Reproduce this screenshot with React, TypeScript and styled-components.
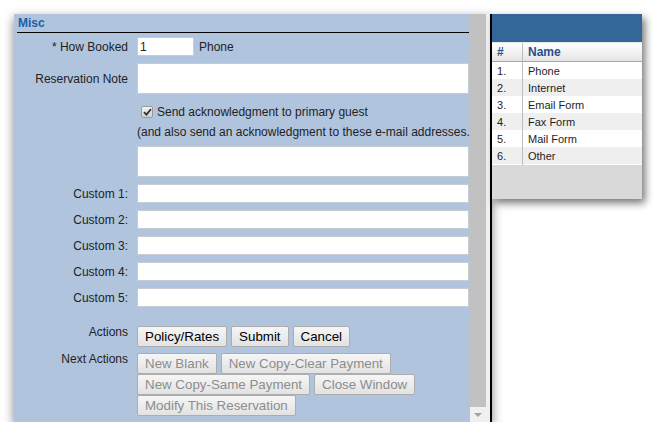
import styled, { createGlobalStyle } from 'styled-components';

const GlobalStyle = createGlobalStyle`
  body {
    margin: 0;
    background: #ffffff;
    font-family: 'Liberation Sans', Arial, sans-serif;
    color: #222222;
  }
`;

const Page = styled.div`
  display: flex;
  align-items: flex-start;
  padding: 14px 0 0 14px;
`;

const LeftWindow = styled.div`
  width: 478px;
  height: 408px;
  box-sizing: border-box;
  display: flex;
  background: #b0c4de;
  border-right: 2px solid #000;
  box-shadow: 0 4px 10px rgba(0, 0, 0, 0.5);
`;

const FormArea = styled.div`
  width: 456px;
  flex: none;
  font-size: 12px;
`;

const SectionTitle = styled.div`
  margin: 0 1px 0 3px;
  padding-left: 1px;
  height: 18px;
  line-height: 18px;
  border-bottom: 1px solid #000;
  font-weight: bold;
  font-size: 12px;
  color: #1d5fa6;
`;

const Row = styled.div<{ $top: number; $align?: string }>`
  display: grid;
  grid-template-columns: 114px 332px;
  column-gap: 9px;
  align-items: ${(p) => p.$align || 'center'};
  margin-top: ${(p) => p.$top}px;
`;

const Label = styled.div<{ $pad?: number }>`
  text-align: right;
  white-space: nowrap;
  margin-top: ${(p) => p.$pad || 0}px;
`;

const Field = styled.div`
  display: flex;
  align-items: center;
  gap: 5px;
`;

const TextInput = styled.input<{ $w?: number }>`
  box-sizing: border-box;
  width: ${(p) => (p.$w ? `${p.$w}px` : '100%')};
  height: 19px;
  margin: 0;
  padding: 0 2px;
  border: 1px solid #c6ccd4;
  background: #fff;
  font-family: 'Liberation Sans', Arial, sans-serif;
  font-size: 12px;
  color: #222;
  outline: none;
`;

const TextArea = styled.div`
  box-sizing: border-box;
  width: 100%;
  height: 31px;
  border: 1px solid #c6ccd4;
  background: #fff;
`;

const CheckLine = styled.label`
  display: flex;
  align-items: center;
  gap: 4px;
  height: 21px;
  padding-left: 4px;
`;

const CheckBox = styled.span`
  box-sizing: border-box;
  width: 12px;
  height: 12px;
  border: 1px solid #9a9a9a;
  border-radius: 2px;
  background: linear-gradient(#f4f4f4, #d0d0d0);
  display: flex;
  align-items: center;
  justify-content: center;
`;

const Note = styled.div`
  line-height: 14px;
  white-space: nowrap;
`;

const ButtonWrap = styled.div`
  display: flex;
  flex-wrap: wrap;
  column-gap: 4px;
  row-gap: 0;
  width: 300px;
`;

const Button = styled.button<{ $disabled?: boolean }>`
  box-sizing: border-box;
  height: 21px;
  margin: 0;
  padding: 0 7px;
  border: 1px solid #adadad;
  border-radius: 2px;
  background: linear-gradient(#f6f6f6, #e2e2e2);
  font-family: 'Liberation Sans', Arial, sans-serif;
  font-size: 13.33px;
  line-height: 19px;
  color: ${(p) => (p.$disabled ? '#8d8d8d' : '#000')};
  white-space: nowrap;
`;

const ScrollCol = styled.div`
  width: 20px;
  display: flex;
  flex-direction: column;
  background: #f0f0f0;
`;

const Thumb = styled.div`
  flex: 1;
  width: 16px;
  background: #c1c1c1;
`;

const ArrowBox = styled.div`
  height: 15px;
  width: 16px;
  display: flex;
  align-items: center;
  justify-content: center;
`;

const DownArrow = styled.span`
  width: 0;
  height: 0;
  border-left: 4px solid transparent;
  border-right: 4px solid transparent;
  border-top: 4px solid #a3a3a3;
`;

const RightPanel = styled.div`
  width: 150px;
  height: 185px;
  background: #d9d9d9;
  box-shadow: 3px 4px 8px rgba(0, 0, 0, 0.55);
`;

const PanelHeader = styled.div`
  height: 28px;
  background: #336699;
  border-bottom: 1px solid #e8e8e8;
`;

const Table = styled.table`
  width: 100%;
  border-collapse: collapse;
  font-size: 11px;
  border-bottom: 1px solid #fff;
`;

const Th = styled.th<{ $first?: boolean }>`
  height: 18px;
  padding: 0 5px;
  text-align: left;
  font-size: 12px;
  font-weight: bold;
  color: #2b4e8e;
  background: linear-gradient(#ffffff, #e4e4e4);
  border-bottom: 1px solid #a8a8a8;
  border-right: ${(p) => (p.$first ? '1px solid #bdbdbd' : 'none')};
  width: ${(p) => (p.$first ? '20px' : 'auto')};
`;

const Tr = styled.tr<{ $alt: boolean }>`
  background: ${(p) => (p.$alt ? '#efefef' : '#ffffff')};
`;

const Td = styled.td<{ $first?: boolean }>`
  height: 17px;
  padding: 0 5px;
  color: #1e1e1e;
  border-right: ${(p) => (p.$first ? '1px solid #bdbdbd' : 'none')};
`;

const methods = ['Phone', 'Internet', 'Email Form', 'Fax Form', 'Mail Form', 'Other'];

export default function App() {
  return (
    <>
      <GlobalStyle />
      <Page>
        <LeftWindow>
          <FormArea>
            <SectionTitle>Misc</SectionTitle>
            <Row $top={4}>
              <Label>* How Booked</Label>
              <Field>
                <TextInput $w={57} defaultValue="1" />
                <span>Phone</span>
              </Field>
            </Row>
            <Row $top={7}>
              <Label>Reservation Note</Label>
              <TextArea />
            </Row>
            <Row $top={7}>
              <span />
              <CheckLine>
                <CheckBox>
                  <svg width="9" height="8" viewBox="0 0 9 8">
                    <path d="M1 4.2 L3.4 6.6 L8 1.2" fill="none" stroke="#333" strokeWidth="1.8" />
                  </svg>
                </CheckBox>
                <span>Send acknowledgment to primary guest</span>
              </CheckLine>
            </Row>
            <Row $top={3}>
              <span />
              <Note>(and also send an acknowledgment to these e-mail addresses.</Note>
            </Row>
            <Row $top={7}>
              <span />
              <TextArea />
            </Row>
            {[1, 2, 3, 4, 5].map((n) => (
              <Row key={n} $top={7}>
                <Label>Custom {n}:</Label>
                <TextInput />
              </Row>
            ))}
            <Row $top={19} $align="start">
              <Label $pad={-1}>Actions</Label>
              <ButtonWrap>
                <Button>Policy/Rates</Button>
                <Button>Submit</Button>
                <Button>Cancel</Button>
              </ButtonWrap>
            </Row>
            <Row $top={6} $align="start">
              <Label $pad={-1}>Next Actions</Label>
              <ButtonWrap>
                <Button $disabled>New Blank</Button>
                <Button $disabled>New Copy-Clear Payment</Button>
                <Button $disabled>New Copy-Same Payment</Button>
                <Button $disabled>Close Window</Button>
                <Button $disabled>Modify This Reservation</Button>
              </ButtonWrap>
            </Row>
          </FormArea>
          <ScrollCol>
            <Thumb />
            <ArrowBox>
              <DownArrow />
            </ArrowBox>
          </ScrollCol>
        </LeftWindow>
        <RightPanel>
          <PanelHeader />
          <Table>
            <thead>
              <tr>
                <Th $first>#</Th>
                <Th>Name</Th>
              </tr>
            </thead>
            <tbody>
              {methods.map((m, i) => (
                <Tr key={m} $alt={i % 2 === 1}>
                  <Td $first>{i + 1}.</Td>
                  <Td>{m}</Td>
                </Tr>
              ))}
            </tbody>
          </Table>
        </RightPanel>
      </Page>
    </>
  );
}
